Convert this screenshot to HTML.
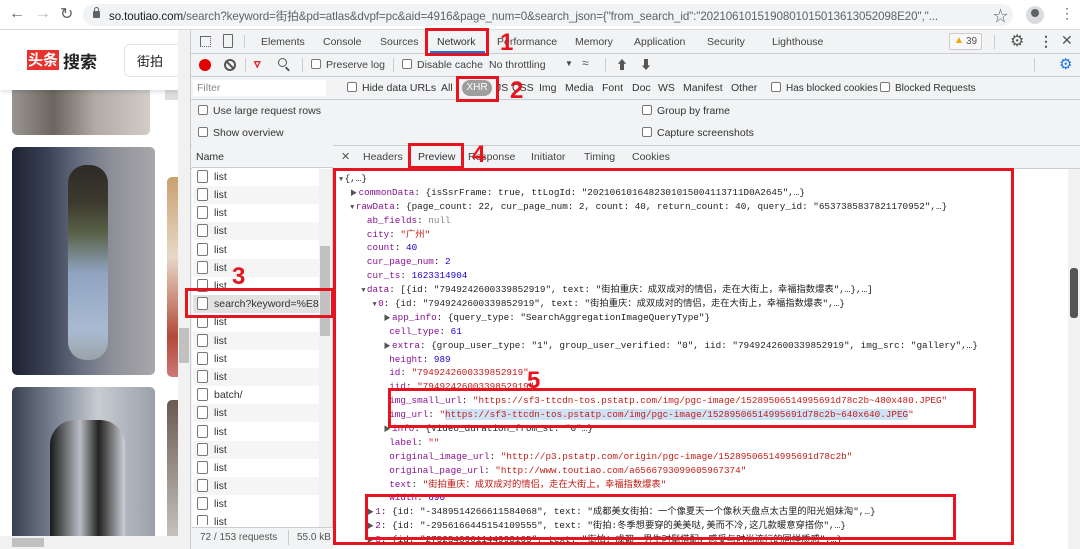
<!DOCTYPE html>
<html><head><meta charset="utf-8">
<style>
*{margin:0;padding:0;box-sizing:border-box}
body{width:1080px;height:549px;overflow:hidden;background:#fff;font-family:"Liberation Sans","Noto Sans CJK SC",sans-serif;position:relative;font-size:11px;color:#333}
.a{position:absolute;white-space:nowrap}
.r{position:absolute;border:3px solid #e5141e}
.n{position:absolute;color:#e5141e;font-weight:bold;font-size:24px;font-family:"Liberation Sans",sans-serif;line-height:1}
.code{position:absolute;font-family:"Liberation Mono","Noto Sans CJK SC",monospace;font-size:9.3px;color:#222}
.code div{height:13.9px;line-height:13.9px;white-space:pre;overflow:visible}
.code i{font-style:normal;font-size:7px;color:#555;line-height:0;margin-right:1.4px}
.k{color:#881391}.s{color:#c41a16}.d{color:#1c00cf}.g{color:#888}
.cb{display:inline-block;width:10px;height:10px;border:1px solid #777;border-radius:2px;vertical-align:-1px;margin-right:5px;background:#fff}
.row{position:absolute;left:193px;width:126px;height:18.2px;font-size:10.5px;color:#333;padding-left:4px;line-height:18px;white-space:nowrap;overflow:hidden}
.row .cb{width:11px;height:13px;vertical-align:-3px;margin-right:6px}
</style></head><body>
<!-- browser top bar -->
<div class="a" style="left:0;top:0;width:1080px;height:30px;background:#fff"></div>
<div class="a" style="left:83px;top:4px;width:930px;height:22px;background:#f1f3f4;border-radius:11px"></div>
<div class="a" style="left:9px;top:5px;font-size:16px;color:#5f6368">&#8592;</div>
<div class="a" style="left:35px;top:5px;font-size:16px;color:#bbb">&#8594;</div>
<div class="a" style="left:60px;top:4px;font-size:16px;color:#5f6368">&#8635;</div>
<div class="a" style="left:93px;top:11px;width:7px;height:7px;background:#5f6368;border-radius:1px"></div>
<div class="a" style="left:94px;top:7px;width:5px;height:6px;border:1.5px solid #5f6368;border-bottom:none;border-radius:3px 3px 0 0"></div>
<div class="a" style="left:109px;top:8px;font-size:11.6px;color:#202124;letter-spacing:-0.1px">so.toutiao.com<span style="color:#5f6368">/search?keyword=街拍&amp;pd=atlas&amp;dvpf=pc&amp;aid=4916&amp;page_num=0&amp;search_json={"from_search_id":"2021061015190801015013613052098E20","...</span></div>
<div class="a" style="left:1000px;top:0;width:80px;height:29px;background:#fff"></div>
<div class="a" style="left:986px;top:4px;width:27px;height:22px;background:#f1f3f4;border-radius:0 11px 11px 0"></div>
<div class="a" style="left:993px;top:5px;font-size:15px;color:#5f6368">&#9734;</div>
<div class="a" style="left:1026px;top:6px;width:18px;height:18px;background:#dadce0;border-radius:50%"></div>
<div class="a" style="left:1031px;top:9px;width:8px;height:8px;background:#5f6368;border-radius:50%"></div>
<div class="a" style="left:1060px;top:5px;font-size:14px;color:#5f6368">&#8942;</div>
<div class="a" style="left:0;top:29px;width:1080px;height:1px;background:#dadce0"></div>

<!-- left page -->
<div class="a" style="left:0;top:30px;width:190px;height:519px;background:#fff"></div>
<div class="a" style="left:12px;top:88px;width:138px;height:47px;border-radius:0 0 5px 5px;background:linear-gradient(90deg,#9a9590,#6c6660 30%,#b0aaa5 60%,#d2cdc8)"></div>
<div class="a" style="left:12px;top:147px;width:143px;height:228px;border-radius:5px;background:linear-gradient(90deg,#1c2230 0%,#3b4256 25%,#6b7385 50%,#8e8f98 70%,#a9a7ab 100%)"></div>
<div class="a" style="left:68px;top:165px;width:40px;height:195px;border-radius:18px;background:linear-gradient(#2d2a28 0%,#3d3b2e 20%,#5a6248 35%,#8fa3c0 55%,#a9bbd2 85%,#9aa2a8 100%)"></div>
<div class="a" style="left:12px;top:387px;width:143px;height:155px;border-radius:5px;background:linear-gradient(90deg,#384150,#7b8494 30%,#c8ccd2 60%,#9aa0aa)"></div>
<div class="a" style="left:50px;top:420px;width:75px;height:122px;border-radius:25px 25px 0 0;background:linear-gradient(90deg,#1a1a1a,#b9bcc4 40%,#222 65%,#d0d2d8)"></div>
<div class="a" style="left:165px;top:90px;width:13px;height:10px;background:#ddd"></div>
<div class="a" style="left:167px;top:177px;width:11px;height:200px;border-radius:5px 0 0 5px;background:linear-gradient(#c9a070,#e7d9c6 40%,#b34a3a 80%,#c77)"></div>
<div class="a" style="left:167px;top:400px;width:11px;height:140px;border-radius:5px 0 0 5px;background:linear-gradient(#6a5a50,#c8c4c0)"></div>
<div class="a" style="left:0;top:30px;width:178px;height:60px;background:#fff;box-shadow:0 2px 4px rgba(0,0,0,.12)"></div>
<div class="a" style="left:27px;top:50px;width:32px;height:20px;background:#e8322e;color:#fff;font-size:15px;font-weight:bold;line-height:20px;text-align:center;font-family:'Noto Sans CJK SC',sans-serif">头条</div>
<div class="a" style="left:63px;top:48px;font-size:17px;font-weight:bold;color:#222;font-family:'Noto Sans CJK SC',sans-serif">搜索</div>
<div class="a" style="left:124px;top:44px;width:60px;height:33px;border:1px solid #e5e5e5;border-right:none;border-radius:6px 0 0 6px;background:#fff"></div>
<div class="a" style="left:137px;top:51px;font-size:13px;color:#222;font-family:'Noto Sans CJK SC',sans-serif">街拍</div>
<div class="a" style="left:178px;top:30px;width:12px;height:519px;background:#f1f1f1"></div>
<div class="a" style="left:179px;top:328px;width:10px;height:35px;background:#c1c1c1"></div>
<div class="a" style="left:0;top:536px;width:178px;height:13px;background:#f1f1f1"></div>
<div class="a" style="left:12px;top:538px;width:32px;height:9px;background:#c1c1c1"></div>

<!-- devtools -->
<div class="a" style="left:190px;top:30px;width:890px;height:519px;background:#f1f3f4;border-left:1px solid #ccc"></div>
<div class="a" style="left:190px;top:53px;width:890px;height:1px;background:#cbcdd1"></div>
<div class="a" style="left:190px;top:76px;width:890px;height:1px;background:#cbcdd1"></div>
<div class="a" style="left:190px;top:99px;width:890px;height:1px;background:#cbcdd1"></div>
<div class="a" style="left:190px;top:145px;width:890px;height:1px;background:#cbcdd1"></div>
<div class="a" style="left:190px;top:168px;width:890px;height:1px;background:#cbcdd1"></div>
<div class="a" style="left:200px;top:36px;width:11px;height:11px;border:1.5px solid #666;border-right-style:dotted;border-bottom-style:dotted"></div>
<div class="a" style="left:223px;top:34px;width:10px;height:14px;border:1.5px solid #666;border-radius:1px"></div>
<div class="a" style="left:244px;top:35px;width:1px;height:13px;background:#ccc"></div>
<div class="a" style="left:261px;top:36px;font-size:10.5px;color:#444">Elements</div>
<div class="a" style="left:323px;top:36px;font-size:10.5px;color:#444">Console</div>
<div class="a" style="left:380px;top:36px;font-size:10.5px;color:#444">Sources</div>
<div class="a" style="left:437px;top:36px;font-size:10.5px;color:#333">Network</div>
<div class="a" style="left:430px;top:51px;width:55px;height:2px;background:#1a73e8"></div>
<div class="a" style="left:497px;top:36px;font-size:10.5px;color:#444">Performance</div>
<div class="a" style="left:575px;top:36px;font-size:10.5px;color:#444">Memory</div>
<div class="a" style="left:634px;top:36px;font-size:10.5px;color:#444">Application</div>
<div class="a" style="left:707px;top:36px;font-size:10.5px;color:#444">Security</div>
<div class="a" style="left:772px;top:36px;font-size:10.5px;color:#444">Lighthouse</div>
<div class="a" style="left:949px;top:33px;width:33px;height:17px;border:1px solid #ccc;background:#f8f8f8;border-radius:2px"></div>
<div class="a" style="left:954px;top:35px;font-size:10px;color:#f0a800">&#9650;</div>
<div class="a" style="left:966px;top:36px;font-size:10px;color:#555">39</div>
<div class="a" style="left:994px;top:35px;width:1px;height:14px;background:#ccc"></div>
<div class="a" style="left:1010px;top:31px;font-size:16px;color:#555">&#9881;</div>
<div class="a" style="left:1039px;top:33px;font-size:14px;color:#555;font-weight:bold">&#8942;</div>
<div class="a" style="left:1061px;top:32px;font-size:14px;color:#555">&#10005;</div>

<div class="a" style="left:199px;top:59px;width:12px;height:12px;border-radius:50%;background:#e50000"></div>
<div class="a" style="left:224px;top:59px;width:12px;height:12px;border-radius:50%;border:2px solid #555"></div>
<div class="a" style="left:224px;top:64px;width:12px;height:2px;background:#555;transform:rotate(45deg)"></div>
<div class="a" style="left:245px;top:58px;width:1px;height:14px;background:#ccc"></div>
<div class="a" style="left:254px;top:56px;font-size:13px;color:#e0141e;font-weight:bold">&#9663;</div>
<div class="a" style="left:278px;top:58px;width:9px;height:9px;border:1.6px solid #555;border-radius:50%"></div>
<div class="a" style="left:285px;top:68px;width:5px;height:1.6px;background:#555;transform:rotate(45deg)"></div>
<div class="a" style="left:302px;top:58px;width:1px;height:14px;background:#ccc"></div>
<div class="a" style="left:311px;top:59px;font-size:10.5px;color:#444"><span class="cb"></span>Preserve log</div>
<div class="a" style="left:393px;top:58px;width:1px;height:14px;background:#ccc"></div>
<div class="a" style="left:402px;top:59px;font-size:10.5px;color:#444"><span class="cb"></span>Disable cache</div>
<div class="a" style="left:489px;top:59px;font-size:10.5px;color:#444">No throttling</div>
<div class="a" style="left:565px;top:59px;font-size:8px;color:#444">&#9660;</div>
<div class="a" style="left:582px;top:56px;font-size:12px;color:#555">&#8776;</div>
<div class="a" style="left:605px;top:58px;width:1px;height:14px;background:#ccc"></div>
<div class="a" style="left:616px;top:56px;font-size:12px;color:#555">&#11014;</div>
<div class="a" style="left:640px;top:56px;font-size:12px;color:#555">&#11015;</div>
<div class="a" style="left:1034px;top:58px;width:1px;height:14px;background:#ccc"></div>
<div class="a" style="left:1059px;top:55px;font-size:15px;color:#1a73e8">&#9881;</div>

<div class="a" style="left:193px;top:80px;width:133px;height:16px;background:#fff"></div>
<div class="a" style="left:197px;top:82px;font-size:10.5px;color:#888">Filter</div>
<div class="a" style="left:347px;top:82px;font-size:10.5px;color:#333"><span class="cb"></span>Hide data URLs</div>
<div class="a" style="left:441px;top:82px;font-size:10.5px;color:#333">All</div>
<div class="a" style="left:462px;top:80px;width:30px;height:16px;background:#9e9e9e;border-radius:8px;color:#fff;font-size:10px;text-align:center;line-height:16px">XHR</div>
<div class="a" style="left:496px;top:82px;font-size:10.5px;color:#333">JS</div>
<div class="a" style="left:512px;top:82px;font-size:10.5px;color:#333">CSS</div>
<div class="a" style="left:539px;top:82px;font-size:10.5px;color:#333">Img</div>
<div class="a" style="left:565px;top:82px;font-size:10.5px;color:#333">Media</div>
<div class="a" style="left:602px;top:82px;font-size:10.5px;color:#333">Font</div>
<div class="a" style="left:632px;top:82px;font-size:10.5px;color:#333">Doc</div>
<div class="a" style="left:658px;top:82px;font-size:10.5px;color:#333">WS</div>
<div class="a" style="left:683px;top:82px;font-size:10.5px;color:#333">Manifest</div>
<div class="a" style="left:731px;top:82px;font-size:10.5px;color:#333">Other</div>
<div class="a" style="left:771px;top:82px;font-size:10px;color:#333"><span class="cb"></span>Has blocked cookies</div>
<div class="a" style="left:880px;top:82px;font-size:10px;color:#333"><span class="cb"></span>Blocked Requests</div>
<div class="a" style="left:198px;top:105px;font-size:10.5px;color:#333"><span class="cb"></span>Use large request rows</div>
<div class="a" style="left:198px;top:127px;font-size:10.5px;color:#333"><span class="cb"></span>Show overview</div>
<div class="a" style="left:642px;top:105px;font-size:10.5px;color:#333"><span class="cb"></span>Group by frame</div>
<div class="a" style="left:642px;top:127px;font-size:10.5px;color:#333"><span class="cb"></span>Capture screenshots</div>

<!-- name column -->
<div class="a" style="left:192px;top:145px;width:141px;height:404px;background:#fff;border-right:1px solid #cbcdd1"></div>
<div class="a" style="left:192px;top:145px;width:141px;height:23px;background:#f1f3f4;border-bottom:1px solid #cbcdd1"></div>
<div class="a" style="left:196px;top:151px;font-size:10.5px;color:#333">Name</div>
<div class="row" style="top:168px"><span class="cb"></span>list</div>
<div class="row" style="top:186px;background:#f5f5f5"><span class="cb"></span>list</div>
<div class="row" style="top:204px"><span class="cb"></span>list</div>
<div class="row" style="top:222px;background:#f5f5f5"><span class="cb"></span>list</div>
<div class="row" style="top:241px"><span class="cb"></span>list</div>
<div class="row" style="top:259px;background:#f5f5f5"><span class="cb"></span>list</div>
<div class="row" style="top:277px"><span class="cb"></span>list</div>
<div class="row" style="top:295px;background:#e2e2e2"><span class="cb"></span>search?keyword=%E8%</div>
<div class="row" style="top:313px"><span class="cb"></span>list</div>
<div class="row" style="top:332px;background:#f5f5f5"><span class="cb"></span>list</div>
<div class="row" style="top:350px"><span class="cb"></span>list</div>
<div class="row" style="top:368px;background:#f5f5f5"><span class="cb"></span>list</div>
<div class="row" style="top:386px"><span class="cb"></span>batch/</div>
<div class="row" style="top:404px;background:#f5f5f5"><span class="cb"></span>list</div>
<div class="row" style="top:423px"><span class="cb"></span>list</div>
<div class="row" style="top:441px;background:#f5f5f5"><span class="cb"></span>list</div>
<div class="row" style="top:459px"><span class="cb"></span>list</div>
<div class="row" style="top:477px;background:#f5f5f5"><span class="cb"></span>list</div>
<div class="row" style="top:495px"><span class="cb"></span>list</div>
<div class="row" style="top:513px;height:12px"><span class="cb"></span>list</div>
<div class="a" style="left:319px;top:169px;width:13px;height:358px;background:#f1f1f1"></div>
<div class="a" style="left:320px;top:246px;width:10px;height:90px;background:#c1c1c1"></div>
<div class="a" style="left:192px;top:527px;width:141px;height:22px;background:#f1f3f4;border-top:1px solid #cbcdd1"></div>
<div class="a" style="left:200px;top:532px;font-size:10px;color:#555">72 / 153 requests</div>
<div class="a" style="left:288px;top:530px;width:1px;height:15px;background:#ccc"></div>
<div class="a" style="left:297px;top:532px;font-size:10px;color:#555">55.0 kB</div>

<!-- detail tabs -->
<div class="a" style="left:341px;top:150px;font-size:11px;color:#555">&#10005;</div>
<div class="a" style="left:363px;top:151px;font-size:10.5px;color:#444">Headers</div>
<div class="a" style="left:418px;top:151px;font-size:10.5px;color:#333">Preview</div>
<div class="a" style="left:468px;top:151px;font-size:10.5px;color:#444">Response</div>
<div class="a" style="left:531px;top:151px;font-size:10.5px;color:#444">Initiator</div>
<div class="a" style="left:584px;top:151px;font-size:10.5px;color:#444">Timing</div>
<div class="a" style="left:632px;top:151px;font-size:10.5px;color:#444">Cookies</div>
<div class="a" style="left:334px;top:169px;width:734px;height:380px;background:#fff;overflow:hidden">
<div class="code" style="left:5px;top:3px">
<div><i>▼</i>{,…}</div>
<div>  <i>▶</i><span class="k">commonData</span>: {isSsrFrame: true, ttLogId: "2021061016482301015004113711D0A2645",…}</div>
<div>  <i>▼</i><span class="k">rawData</span>: {page_count: 22, cur_page_num: 2, count: 40, return_count: 40, query_id: "6537385837821170952",…}</div>
<div>     <span class="k">ab_fields</span>: <span class="g">null</span></div>
<div>     <span class="k">city</span>: <span class="s">"广州"</span></div>
<div>     <span class="k">count</span>: <span class="d">40</span></div>
<div>     <span class="k">cur_page_num</span>: <span class="d">2</span></div>
<div>     <span class="k">cur_ts</span>: <span class="d">1623314904</span></div>
<div>    <i>▼</i><span class="k">data</span>: [{id: "7949242600339852919", text: "街拍重庆：成双成对的情侣，走在大街上，幸福指数爆表",…},…]</div>
<div>      <i>▼</i><span class="k">0</span>: {id: "7949242600339852919", text: "街拍重庆：成双成对的情侣，走在大街上，幸福指数爆表",…}</div>
<div>        <i>▶</i><span class="k">app_info</span>: {query_type: "SearchAggregationImageQueryType"}</div>
<div>         <span class="k">cell_type</span>: <span class="d">61</span></div>
<div>        <i>▶</i><span class="k">extra</span>: {group_user_type: "1", group_user_verified: "0", iid: "7949242600339852919", img_src: "gallery",…}</div>
<div>         <span class="k">height</span>: <span class="d">989</span></div>
<div>         <span class="k">id</span>: <span class="s">"7949242600339852919"</span></div>
<div>         <span class="k">iid</span>: <span class="s">"7949242600339852919"</span></div>
<div>         <span class="k">img_small_url</span>: <span class="s">"https://sf3-ttcdn-tos.pstatp.com/img/pgc-image/15289506514995691d78c2b~480x480.JPEG"</span></div>
<div>         <span class="k">img_url</span>: <span class="s">"<span style="background:#cfe3f7">https://sf3-ttcdn-tos.pstatp.com/img/pgc-image/15289506514995691d78c2b~640x640.JPEG</span>"</span></div>
<div>        <i>▶</i><span class="k">info</span>: {video_duration_from_st: "0"…}</div>
<div>         <span class="k">label</span>: <span class="s">""</span></div>
<div>         <span class="k">original_image_url</span>: <span class="s">"http://p3.pstatp.com/origin/pgc-image/15289506514995691d78c2b"</span></div>
<div>         <span class="k">original_page_url</span>: <span class="s">"http://www.toutiao.com/a6566793099605967374"</span></div>
<div>         <span class="k">text</span>: <span class="s">"街拍重庆：成双成对的情侣，走在大街上，幸福指数爆表"</span></div>
<div>         <span class="k">width</span>: <span class="d">690</span></div>
<div>     <i>▶</i><span class="k">1</span>: {id: "-3489514266611584068", text: "成都美女街拍：一个像夏天一个像秋天盘点太古里的阳光姐妹淘",…}</div>
<div>     <i>▶</i><span class="k">2</span>: {id: "-2956166445154109555", text: "街拍:冬季想要穿的美美哒,美而不冷,这几款暖意穿搭你",…}</div>
<div>     <i>▶</i><span class="k">3</span>: {id: "2752548961144993165", text: "街拍：成都一男生时髦搭配，感受与时尚流行的同样质感",…}</div>
</div>
</div>
<div class="a" style="left:1068px;top:169px;width:12px;height:380px;background:#f1f1f1"></div>
<div class="a" style="left:1070px;top:268px;width:8px;height:50px;background:#555;border-radius:3px"></div>

<!-- annotations -->
<div class="r" style="left:425px;top:28px;width:64px;height:28px"></div>
<div class="n" style="left:500px;top:31px">1</div>
<div class="r" style="left:456px;top:76px;width:43px;height:26px"></div>
<div class="n" style="left:510px;top:79px">2</div>
<div class="r" style="left:185px;top:288px;width:149px;height:30px"></div>
<div class="n" style="left:232px;top:265px">3</div>
<div class="r" style="left:408px;top:143px;width:56px;height:26px"></div>
<div class="n" style="left:472px;top:143px">4</div>
<div class="r" style="left:333px;top:168px;width:681px;height:377px"></div>
<div class="n" style="left:527px;top:369px">5</div>
<div class="r" style="left:388px;top:388px;width:588px;height:40px"></div>
<div class="r" style="left:365px;top:494px;width:591px;height:46px"></div>
</body></html>
